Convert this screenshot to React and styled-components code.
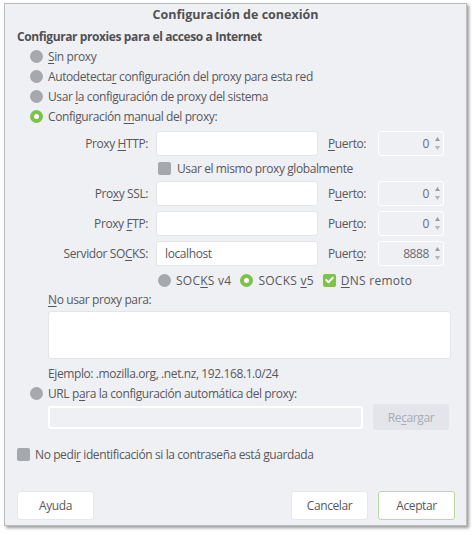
import React from "react";
import styled, { createGlobalStyle } from "styled-components";

const GlobalStyle = createGlobalStyle`
  html, body {
    margin: 0;
    padding: 0;
    background: #ffffff;
  }
  body {
    font-family: "Open Sans", "Noto Sans", sans-serif;
    font-size: 12px;
    letter-spacing: -0.4px;
    color: #58585b;
  }
`;

const App = () => {
  return (
    <>
      <GlobalStyle />
      <Page>
        <Window>
          <TitleBar>Configuración de conexión</TitleBar>
          <Body>
            <Heading>Configurar proxies para el acceso a Internet</Heading>
            <RadioList>
              <Option>
                <Radio />
                <span>
                  <U>S</U>in proxy
                </span>
              </Option>
              <Option>
                <Radio />
                <span>
                  Autodetecta<U>r</U> configuración del proxy para esta red
                </span>
              </Option>
              <Option>
                <Radio />
                <span>
                  Usar <U>l</U>a configuración de proxy del sistema
                </span>
              </Option>
              <Option>
                <Radio $checked />
                <span>
                  Configuración <U>m</U>anual del proxy:
                </span>
              </Option>
            </RadioList>

            <FieldGrid>
              <FieldLabel>
                Proxy <U>H</U>TTP:
              </FieldLabel>
              <TextInput />
              <PortLabel>
                <U>P</U>uerto:
              </PortLabel>
              <Spin value="0" />

              <InlineRow $gap="6px">
                <Check />
                <span>Usar el mismo proxy globalmente</span>
              </InlineRow>

              <FieldLabel>
                Pro<U>x</U>y SSL:
              </FieldLabel>
              <TextInput />
              <PortLabel>
                P<U>u</U>erto:
              </PortLabel>
              <Spin value="0" />

              <FieldLabel>
                Proxy <U>F</U>TP:
              </FieldLabel>
              <TextInput />
              <PortLabel>
                Puer<U>t</U>o:
              </PortLabel>
              <Spin value="0" />

              <FieldLabel>
                Servidor SO<U>C</U>KS:
              </FieldLabel>
              <TextInput>localhost</TextInput>
              <PortLabel>
                Puert<U>o</U>:
              </PortLabel>
              <Spin value="8888" />

              <InlineRow $gap="9px">
                <Pair>
                  <Radio />
                  <span>
                    SOC<U>K</U>S v4
                  </span>
                </Pair>
                <Pair>
                  <Radio $checked />
                  <span>
                    SOCKS <U>v</U>5
                  </span>
                </Pair>
                <Pair>
                  <Check $checked />
                  <span>
                    <U>D</U>NS remoto
                  </span>
                </Pair>
              </InlineRow>
            </FieldGrid>

            <Indented>
              <SmallLabel>
                <U>N</U>o usar proxy para:
              </SmallLabel>
              <TextArea />
              <Hint>Ejemplo: .mozilla.org, .net.nz, 192.168.1.0/24</Hint>
            </Indented>

            <Option $indent="13px">
              <Radio />
              <span>
                URL p<U>a</U>ra la configuración automática del proxy:
              </span>
            </Option>
            <UrlRow>
              <UrlInput />
              <ReloadButton>
                Re<U>c</U>argar
              </ReloadButton>
            </UrlRow>

            <AutoLogin>
              <Check />
              <span>
                No pedi<U>r</U> identificación si la contraseña está guardada
              </span>
            </AutoLogin>
          </Body>
          <Footer>
            <Button>Ayuda</Button>
            <Spacer />
            <Button>Cancelar</Button>
            <Button $primary>Aceptar</Button>
          </Footer>
        </Window>
      </Page>
    </>
  );
};

const Spin = ({ value }) => (
  <SpinBox>
    <SpinValue>{value}</SpinValue>
    <Arrows>
      <svg width="5" height="4" viewBox="0 0 5 4">
        <path d="M2.5 0 L5 4 L0 4 Z" fill="#9a9ca1" />
      </svg>
      <svg width="5" height="4" viewBox="0 0 5 4">
        <path d="M0 0 L5 0 L2.5 4 Z" fill="#b3b5b9" />
      </svg>
    </Arrows>
  </SpinBox>
);

export default App;

const Page = styled.div`
  width: 474px;
  height: 535px;
  padding: 3px 0 0 4px;
  box-sizing: border-box;
`;

const Window = styled.div`
  width: 463px;
  height: 523px;
  box-sizing: border-box;
  background: #eff0f4;
  border: 1px solid #bdbdc0;
  box-shadow: 2px 2px 3px rgba(0, 0, 0, 0.4);
  display: flex;
  flex-direction: column;
`;

const TitleBar = styled.div`
  height: 20px;
  display: flex;
  align-items: center;
  justify-content: center;
  font-weight: 700;
  font-size: 12.5px;
  letter-spacing: 0;
  color: #505053;
`;

const Body = styled.div`
  padding: 4px 15px 0 12px;
  display: flex;
  flex-direction: column;
`;

const Heading = styled.div`
  height: 18px;
  line-height: 18px;
  font-weight: 700;
  color: #505053;
`;

const RadioList = styled.div`
  display: flex;
  flex-direction: column;
  padding-left: 13px;
`;

const Option = styled.div`
  height: 20px;
  display: flex;
  align-items: center;
  gap: 5px;
  padding-left: ${(p) => p.$indent || "0"};
`;

const U = styled.span`
  text-decoration: underline;
  text-underline-offset: 2px;
`;

const Radio = styled.span`
  width: 13px;
  height: 13px;
  border-radius: 50%;
  flex: none;
  box-sizing: border-box;
  background: ${(p) => (p.$checked ? "#ffffff" : "#a5a8ad")};
  border: ${(p) => (p.$checked ? "4px solid #7dc24a" : "none")};
`;

const Check = styled.span`
  width: 13px;
  height: 13px;
  border-radius: 2px;
  flex: none;
  position: relative;
  background: ${(p) => (p.$checked ? "#7dc24a" : "#a5a8ad")};
  &::after {
    content: "";
    display: ${(p) => (p.$checked ? "block" : "none")};
    position: absolute;
    left: 4px;
    top: 1.5px;
    width: 3px;
    height: 6px;
    border: solid #ffffff;
    border-width: 0 2px 2px 0;
    transform: rotate(45deg);
  }
`;

const FieldGrid = styled.div`
  margin-top: 5px;
  padding-left: 31px;
  display: grid;
  grid-template-columns: 100px 162px 44px 66px;
  grid-template-rows: 25px 15px 25px 25px 25px 18px;
  column-gap: 8px;
  row-gap: 5px;
  align-items: center;
`;

const FieldLabel = styled.div`
  text-align: right;
  white-space: nowrap;
`;

const PortLabel = styled.div`
  padding-left: 2px;
  white-space: nowrap;
`;

const TextInput = styled.div`
  height: 25px;
  box-sizing: border-box;
  background: #ffffff;
  border: 1px solid #e4e5e9;
  border-radius: 3px;
  padding: 0 8px;
  display: flex;
  align-items: center;
`;

const SpinBox = styled.div`
  height: 25px;
  box-sizing: border-box;
  background: #eff0f4;
  border: 1px solid #ffffff;
  border-radius: 3px;
  display: flex;
  align-items: center;
  padding: 0 3px 0 6px;
  gap: 6px;
`;

const SpinValue = styled.span`
  flex: 1;
  text-align: right;
  color: #6b6b6e;
`;

const Arrows = styled.span`
  display: flex;
  flex-direction: column;
  gap: 5px;
  line-height: 0;
`;

const InlineRow = styled.div`
  grid-column: 2 / span 3;
  display: flex;
  align-items: center;
  gap: ${(p) => p.$gap};
  padding-left: 2px;
  height: 18px;
  white-space: nowrap;
`;

const Pair = styled.span`
  display: flex;
  align-items: center;
  gap: 5px;
  letter-spacing: 0.25px;
`;

const Indented = styled.div`
  padding-left: 31px;
  margin-top: 2px;
  display: flex;
  flex-direction: column;
`;

const SmallLabel = styled.div`
  height: 18px;
  line-height: 18px;
`;

const TextArea = styled.div`
  margin-top: 2px;
  height: 48px;
  box-sizing: border-box;
  background: #ffffff;
  border: 1px solid #e4e5e9;
  border-radius: 3px;
`;

const Hint = styled.div`
  margin-top: 6px;
  height: 18px;
  line-height: 18px;
`;

const UrlRow = styled.div`
  margin-top: 1px;
  padding-left: 31px;
  display: flex;
  align-items: center;
  gap: 10px;
  height: 26px;
`;

const UrlInput = styled.div`
  width: 315px;
  height: 23px;
  box-sizing: border-box;
  background: #eff0f4;
  border: 2px solid #ffffff;
  border-radius: 3px;
`;

const ReloadButton = styled.div`
  width: 76px;
  height: 26px;
  box-sizing: border-box;
  background: #e3e5ea;
  border-radius: 3px;
  display: flex;
  align-items: center;
  justify-content: center;
  color: #a9acb2;
`;

const AutoLogin = styled.div`
  margin-top: 15px;
  height: 18px;
  display: flex;
  align-items: center;
  gap: 5px;
`;

const Footer = styled.div`
  margin-top: auto;
  padding: 0 11px 5px 12px;
  display: flex;
  gap: 10px;
`;

const Spacer = styled.div`
  flex: 1;
`;

const Button = styled.div`
  width: 77px;
  height: 29px;
  box-sizing: border-box;
  background: #ffffff;
  border: 1px solid ${(p) => (p.$primary ? "#b9d7a4" : "#e6e7eb")};
  border-radius: 3px;
  display: flex;
  align-items: center;
  justify-content: center;
`;
